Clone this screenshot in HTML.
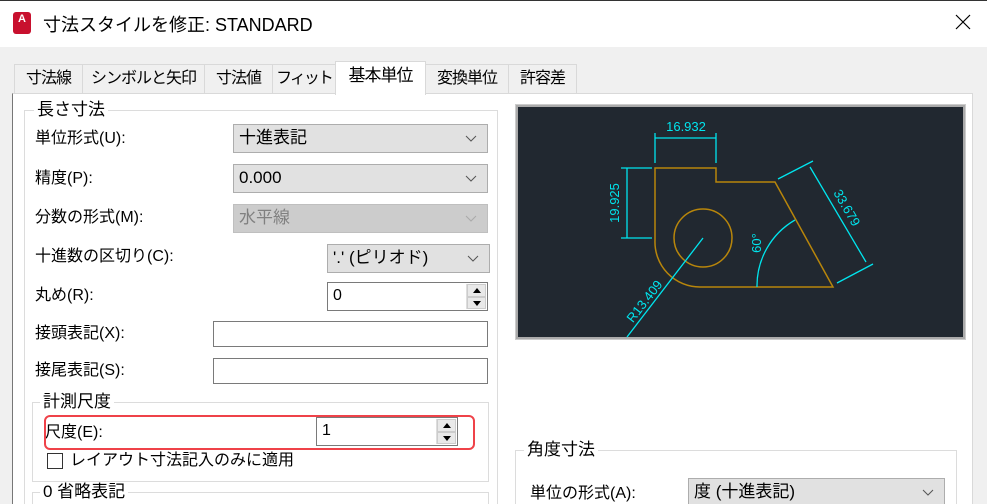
<!DOCTYPE html>
<html><head><meta charset="utf-8"><style>
*{box-sizing:border-box;margin:0;padding:0}
html,body{width:987px;height:504px;overflow:hidden}
body{background:#f0f0f0;position:relative;font-family:"Liberation Sans","Noto Sans CJK JP",sans-serif;font-size:16px;color:#000}
.a{position:absolute;white-space:nowrap}
.title{left:0;top:0;width:987px;height:47px;background:#fff;border-top:1px solid #333}
.tab{position:absolute;top:64px;height:30px;border:1px solid #d9d9d9;border-bottom:none;background:#f0f0f0;font-size:16px;letter-spacing:-1px;text-align:center;line-height:28px;white-space:nowrap;overflow:hidden}
.panel{left:12px;top:93px;width:961px;height:420px;background:#fff;border:1px solid #d9d9d9;border-left:1px solid #777}
.grp{position:absolute;border:1px solid #dcdcdc}
.gl{position:absolute;background:#fff;padding:0 3px;font-size:17px;line-height:18px}
.lbl{position:absolute;font-size:16px;line-height:18px;white-space:nowrap}
.cb{position:absolute;background:#e1e1e1;border:1px solid #adadad;font-size:17px;line-height:26px;padding-left:5px;white-space:nowrap}
.cb svg{position:absolute;right:10px;top:10px}
.tb{position:absolute;background:#fff;border:1px solid #7a7a7a;font-size:16px;padding-left:5px}
.spin{position:absolute;right:1px;top:1px;width:20px;bottom:1px;border-left:1px solid #ddd}
.spin div{height:50%;background:#e9e9e9;border:1px solid #ccc;position:relative}
</style></head><body>
<div class="a title"></div>
<div class="a" style="left:13px;top:12px;width:18px;height:22px;background:#c8102e;border-radius:3px;color:#fff;font-size:11px;font-weight:bold;text-align:center;line-height:15px">A</div>
<div class="a" style="left:43px;top:11px;font-size:18px">寸法スタイルを修正: STANDARD</div>
<svg class="a" style="left:955px;top:14px" width="16" height="16"><path d="M1 1L15 15M15 1L1 15" stroke="#000" stroke-width="1.2"/></svg>

<div class="tab" style="left:14px;width:69px">寸法線</div>
<div class="tab" style="left:82px;width:123px">シンボルと矢印</div>
<div class="tab" style="left:204px;width:69px">寸法値</div>
<div class="tab" style="left:272px;width:64px;letter-spacing:-2px">フィット</div>
<div class="tab" style="left:425px;width:84px">変換単位</div>
<div class="tab" style="left:508px;width:69px">許容差</div>
<div class="a panel"></div>
<div class="tab" style="left:335px;top:61px;width:91px;height:34px;background:#fff;z-index:2;font-size:17px">基本単位</div>

<div class="grp" style="left:24px;top:110px;width:474px;height:400px"></div>
<div class="gl" style="left:34px;top:101px">長さ寸法</div>
<div class="lbl" style="left:35px;top:130px">単位形式(U):</div>
<div class="cb" style="left:233px;top:124px;width:255px;height:29px">十進表記<svg width="12" height="8"><path d="M1 1L6 6L11 1" stroke="#555" fill="none"/></svg></div>
<div class="lbl" style="left:35px;top:170px">精度(P):</div>
<div class="cb" style="left:233px;top:164px;width:255px;height:29px">0.000<svg width="12" height="8"><path d="M1 1L6 6L11 1" stroke="#555" fill="none"/></svg></div>
<div class="lbl" style="left:35px;top:209px">分数の形式(M):</div>
<div class="cb" style="left:233px;top:204px;width:255px;height:29px;background:#ccc;border-color:#bfbfbf;color:#808080">水平線<svg width="12" height="8"><path d="M1 1L6 6L11 1" stroke="#aaa" fill="none"/></svg></div>
<div class="lbl" style="left:35px;top:248px">十進数の区切り(C):</div>
<div class="cb" style="left:327px;top:244px;width:163px;height:29px">'.' (ピリオド)<svg width="12" height="8"><path d="M1 1L6 6L11 1" stroke="#555" fill="none"/></svg></div>
<div class="lbl" style="left:35px;top:287px">丸め(R):</div>
<div class="tb" style="left:327px;top:282px;width:161px;height:29px;line-height:26px">0<div class="spin"><div><svg style="position:absolute;left:5px;top:3px" width="8" height="5"><path d="M0 5L4 0L8 5Z" fill="#000"/></svg></div><div><svg style="position:absolute;left:5px;top:3px" width="8" height="5"><path d="M0 0L4 5L8 0Z" fill="#000"/></svg></div></div></div>
<div class="lbl" style="left:35px;top:325px">接頭表記(X):</div>
<div class="tb" style="left:213px;top:321px;width:275px;height:26px"></div>
<div class="lbl" style="left:35px;top:362px">接尾表記(S):</div>
<div class="tb" style="left:213px;top:358px;width:275px;height:26px"></div>

<div class="grp" style="left:32px;top:402px;width:457px;height:80px"></div>
<div class="gl" style="left:40px;top:393px">計測尺度</div>
<div class="lbl" style="left:45px;top:424px">尺度(E):</div>
<div class="tb" style="left:316px;top:417px;width:142px;height:29px;line-height:26px">1<div class="spin"><div><svg style="position:absolute;left:5px;top:3px" width="8" height="5"><path d="M0 5L4 0L8 5Z" fill="#000"/></svg></div><div><svg style="position:absolute;left:5px;top:3px" width="8" height="5"><path d="M0 0L4 5L8 0Z" fill="#000"/></svg></div></div></div>
<div class="a" style="left:44px;top:415px;width:431px;height:35px;border:2px solid #ef4249;border-radius:6px"></div>
<div class="a" style="left:47px;top:453px;width:16px;height:16px;border:1px solid #333;background:#fff"></div>
<div class="lbl" style="left:70px;top:452px">レイアウト寸法記入のみに適用</div>
<div class="grp" style="left:32px;top:492px;width:457px;height:30px"></div>
<div class="gl" style="left:40px;top:483px">0 省略表記</div>

<div class="a" style="left:515px;top:104px;width:451px;height:236px;border:1px solid #ccc;background:#aaa;padding:2px"><div style="width:100%;height:100%;background:#212830"></div></div>
<svg class="a" style="left:0;top:0" width="987" height="504" font-family="Liberation Sans" font-size="13">
<g stroke="#b8860b" stroke-width="1.5" fill="none">
<path d="M655 168H716V182H775L833 287H700A45 45 0 0 1 655 240Z"/>
<circle cx="703" cy="238" r="29"/>
</g>
<g stroke="#00e5ee" stroke-width="1.3" fill="none">
<path d="M655 138H716M655 133V163M716 133V163"/>
<path d="M627 168V238M621 168H652M621 238H652"/>
<path d="M810 167L866 262M778 179L813 161M837 283L873 264"/>
<path d="M757 287A76 76 0 0 1 795 220"/>
<path d="M703 238L627 337"/>
</g>
<g fill="#00e5ee">
<text x="686" y="131" text-anchor="middle">16.932</text>
<text transform="translate(619 203) rotate(-90)" text-anchor="middle">19.925</text>
<text transform="translate(843 210) rotate(60)" text-anchor="middle">33.679</text>
<text transform="translate(761 243) rotate(-90)" text-anchor="middle">60°</text>
<text transform="translate(648 304) rotate(-52)" text-anchor="middle">R13.409</text>
</g>
</svg>

<div class="grp" style="left:515px;top:450px;width:442px;height:60px"></div>
<div class="gl" style="left:524px;top:441px">角度寸法</div>
<div class="lbl" style="left:530px;top:485px">単位の形式(A):</div>
<div class="cb" style="left:688px;top:478px;width:257px;height:29px">度 (十進表記)<svg width="12" height="8"><path d="M1 1L6 6L11 1" stroke="#555" fill="none"/></svg></div>
</body></html>
